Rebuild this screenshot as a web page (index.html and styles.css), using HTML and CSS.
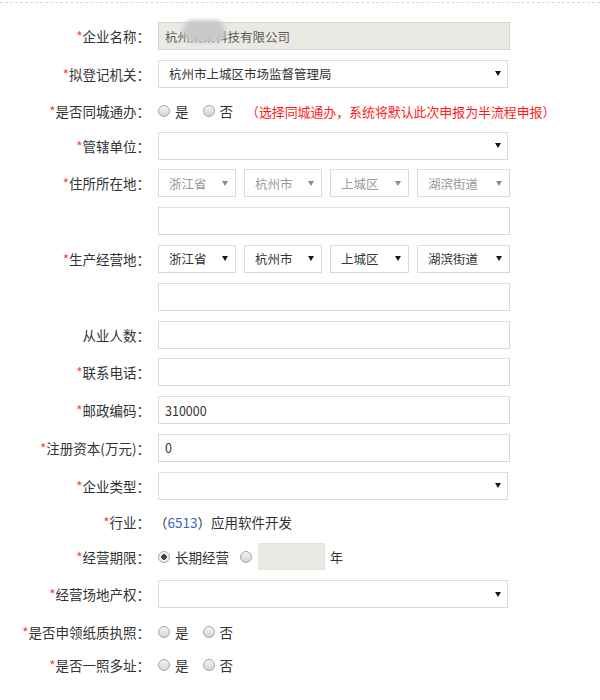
FILE: index.html
```html
<!DOCTYPE html>
<html lang="zh-CN">
<head>
<meta charset="utf-8">
<title>企业信息</title>
<link rel="stylesheet" href="styles.css">
</head>
<body>
<div class="form">
  <div class="row">
    <div class="lbl"><span class="req">*</span>企业名称：</div>
    <div class="box ro wide">杭州某某科技有限公司<span class="blur"></span></div>
  </div>
  <div class="row">
    <div class="lbl"><span class="req">*</span>拟登记机关：</div>
    <div class="box sel">杭州市上城区市场监督管理局<span class="arrow"></span></div>
  </div>
  <div class="row r-radio">
    <div class="lbl"><span class="req">*</span>是否同城通办：</div>
    <div class="opts">
      <span class="opt"><span class="radio"></span>是</span>
      <span class="opt"><span class="radio"></span>否</span>
      <span class="warn">（选择同城通办，系统将默认此次申报为半流程申报）</span>
    </div>
  </div>
  <div class="row">
    <div class="lbl"><span class="req">*</span>管辖单位：</div>
    <div class="box sel"><span></span><span class="arrow"></span></div>
  </div>
  <div class="row">
    <div class="lbl"><span class="req">*</span>住所所在地：</div>
    <div class="addr">
      <div class="box asel dis s1">浙江省<span class="arrow"></span></div>
      <div class="box asel dis s2">杭州市<span class="arrow"></span></div>
      <div class="box asel dis s3">上城区<span class="arrow"></span></div>
      <div class="box asel dis s4">湖滨街道<span class="arrow"></span></div>
    </div>
  </div>
  <div class="row">
    <div class="lbl"></div>
    <div class="box wide"></div>
  </div>
  <div class="row">
    <div class="lbl"><span class="req">*</span>生产经营地：</div>
    <div class="addr">
      <div class="box asel s1">浙江省<span class="arrow"></span></div>
      <div class="box asel s2">杭州市<span class="arrow"></span></div>
      <div class="box asel s3">上城区<span class="arrow"></span></div>
      <div class="box asel s4">湖滨街道<span class="arrow"></span></div>
    </div>
  </div>
  <div class="row">
    <div class="lbl"></div>
    <div class="box wide"></div>
  </div>
  <div class="row">
    <div class="lbl">从业人数：</div>
    <div class="box wide"></div>
  </div>
  <div class="row">
    <div class="lbl"><span class="req">*</span>联系电话：</div>
    <div class="box wide"></div>
  </div>
  <div class="row">
    <div class="lbl"><span class="req">*</span>邮政编码：</div>
    <div class="box wide">310000</div>
  </div>
  <div class="row">
    <div class="lbl"><span class="req">*</span>注册资本(万元)：</div>
    <div class="box wide">0</div>
  </div>
  <div class="row">
    <div class="lbl"><span class="req">*</span>企业类型：</div>
    <div class="box sel"><span></span><span class="arrow"></span></div>
  </div>
  <div class="row r-text">
    <div class="lbl"><span class="req">*</span>行业：</div>
    <div class="plain">（<span class="code">6513</span>）应用软件开发</div>
  </div>
  <div class="row r-term">
    <div class="lbl"><span class="req">*</span>经营期限：</div>
    <div class="opts">
      <span class="opt opt-term"><span class="radio on"></span>长期经营</span>
      <span class="opt opt-tight"><span class="radio"></span><span class="box ro years"></span><span class="unit">年</span></span>
    </div>
  </div>
  <div class="row">
    <div class="lbl"><span class="req">*</span>经营场地产权：</div>
    <div class="box sel"><span></span><span class="arrow"></span></div>
  </div>
  <div class="row r-radio2">
    <div class="lbl"><span class="req">*</span>是否申领纸质执照：</div>
    <div class="opts">
      <span class="opt"><span class="radio"></span>是</span>
      <span class="opt"><span class="radio"></span>否</span>
    </div>
  </div>
  <div class="row r-radio3">
    <div class="lbl"><span class="req">*</span>是否一照多址：</div>
    <div class="opts">
      <span class="opt"><span class="radio"></span>是</span>
      <span class="opt"><span class="radio"></span>否</span>
    </div>
  </div>
</div>
</body>
</html>
```

FILE: styles.css
```css
html, body {
  margin: 0;
  background: #ffffff;
}
body {
  font-family: "Noto Sans CJK SC", "Microsoft YaHei", sans-serif;
  color: #333333;
  text-spacing-trim: space-all;
}
.form {
  margin-top: 2px;
  border-top: 1px dashed #d8d8d8;
  padding-top: 19px;
  display: flex;
  flex-direction: column;
  gap: 9.78px;
}
.row {
  display: flex;
  align-items: center;
  height: 28px;
  flex: none;
}
.r-radio { height: 24.4px; padding-top: 3px; box-sizing: border-box; }
.r-text { height: 23.4px; padding-top: 2px; box-sizing: border-box; }
.r-term { height: 28px; }
.r-radio2 { height: 27px; }
.r-radio3 { height: 21px; }
.lbl {
  width: 150px;
  flex: none;
  margin-right: 8px;
  text-align: right;
  font-size: 13.5px;
  color: #333333;
  white-space: nowrap;
}
.req {
  color: #ff3b3b;
}
.box {
  position: relative;
  box-sizing: border-box;
  height: 28px;
  border: 1px solid #d9d9d9;
  border-top-color: #dedede;
  background: #ffffff;
  display: flex;
  align-items: center;
  padding: 0 6px;
  font-size: 12.5px;
  color: #333333;
  flex: none;
  white-space: nowrap;
}
.wide { width: 352px; }
.ro {
  background: #ebe9e4;
  color: #5a5a5a;
  border-color: #d6d4cf;
}
.blur {
  position: absolute;
  left: 24px;
  top: -3px;
  width: 42px;
  height: 22px;
  border-radius: 10px;
  background: #c9c9c9;
  filter: blur(2px);
}
.sel {
  width: 350px;
  padding: 0 6px 0 10px;
  justify-content: space-between;
}
.arrow {
  width: 0;
  height: 0;
  border-left: 3px solid transparent;
  border-right: 3px solid transparent;
  border-top: 5px solid #1a1a1a;
  flex: none;
}
.addr {
  display: flex;
  gap: 8px;
}
.asel {
  justify-content: space-between;
  padding: 0 7px 0 10px;
}
.s1, .s2 { width: 78px; }
.s3 { width: 79px; }
.s4 { width: 93px; }
.dis { color: #999999; }
.dis .arrow { border-top-color: #8a8a8a; }
.opts {
  display: flex;
  align-items: center;
  font-size: 13.5px;
  color: #333333;
  white-space: nowrap;
}
.opt {
  display: flex;
  align-items: center;
  margin-right: 14px;
}
.opt-term { margin-right: 11px; }
.opt-tight { margin-right: 0; }
.radio {
  width: 12px;
  height: 12px;
  box-sizing: border-box;
  border-radius: 50%;
  border: 1px solid #a6a6a6;
  background: linear-gradient(#f4f4f4, #d4d4d4);
  margin-right: 5px;
  flex: none;
  position: relative;
}
.radio.on {
  background: radial-gradient(circle, #444 0 2.6px, #f2f2f2 3px 100%);
}
.warn {
  color: #ff1a1a;
  font-size: 12.9px;
  margin-left: -1px;
}
.plain {
  font-size: 13.5px;
  color: #333333;
  white-space: nowrap;
  margin-left: -4px;
}
.code { color: #3b62c9; }
.years {
  width: 67px;
  height: 27px;
  margin-left: 1px;
  border-color: #e6e4de;
}
.unit {
  margin-left: 5px;
  font-size: 13px;
}
```
